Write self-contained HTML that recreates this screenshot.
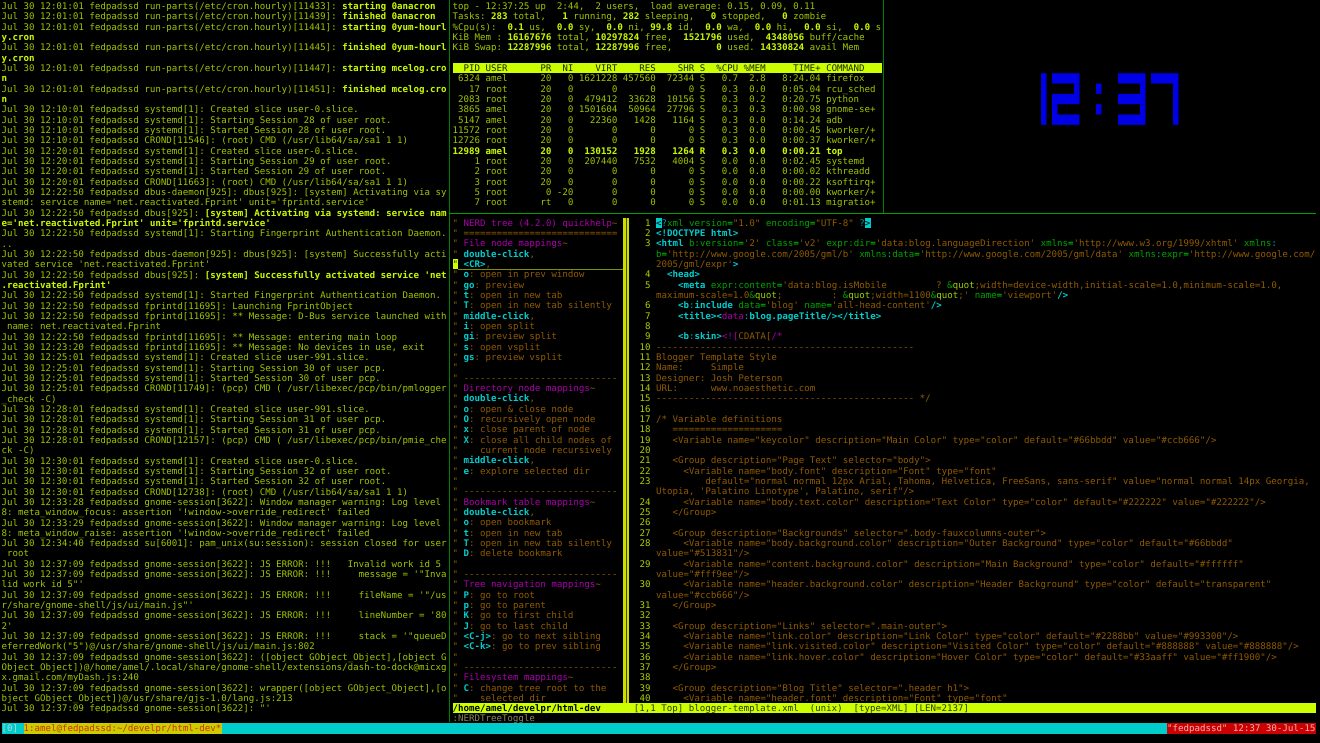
<!DOCTYPE html>
<html><head><meta charset="utf-8"><title>tmux</title>
<style>
html,body{margin:0;padding:0;background:#000;width:1320px;height:743px;overflow:hidden}
#w{position:relative;width:1320px;height:743px;overflow:hidden;filter:blur(.35px);background:#000}
pre{position:absolute;margin:1.1px 0 0;font-family:"DejaVu Sans Mono","Liberation Mono",monospace;font-size:9.13px;line-height:10.33px;white-space:pre;text-rendering:geometricPrecision;font-kerning:none}
.r{position:absolute}
#log{left:1.5px;top:1px;color:#9cc200}
#log b,#top b{color:#c6f800;font-weight:bold}
#top{left:452.5px;top:1px;color:#9cc200}
#tree,#code{color:#8f5a00;top:217.72px}
#tree{left:452.5px}
#code{left:628.5px}
i{font-style:normal;font-weight:bold;color:#00cccc}
em{font-style:normal;color:#00a000}
u{text-decoration:none;color:#00e000}
s{text-decoration:none;color:#a800a8}
#code b{font-weight:normal;color:#a8cc00}
tt{font-family:inherit;color:#00a0a0}
var{font-style:normal;color:#99cc00}
</style></head><body><div id="w">
<div class="r" style="left:449px;top:0;width:1px;height:722px;background:#008000"></div>
<div class="r" style="left:883px;top:0;width:1px;height:213px;background:#008000"></div>
<div class="r" style="left:449px;top:212.6px;width:867px;height:1px;background:#00a000"></div>
<div class="r" style="left:452.5px;top:62.9px;width:429px;height:10.32px;background:#ccff00"></div>
<div class="r" style="left:623px;top:217.7px;width:5.5px;height:485.1px;background:#ccdd00"></div>
<div class="r" style="left:625.5px;top:217.7px;width:1px;height:485.1px;background:#4a5000"></div>
<div class="r" style="left:452.5px;top:259px;width:5.5px;height:10.3px;background:#ccff00"></div>
<div class="r" style="left:458px;top:268.6px;width:165px;height:1px;background:#7f8f00"></div>
<div class="r" style="left:656px;top:218px;width:5.5px;height:10px;background:#00cccc"></div>
<div class="r" style="left:865px;top:218px;width:5.5px;height:10px;background:#00cccc"></div>
<div class="r" style="left:452.5px;top:702.8px;width:863.5px;height:10.32px;background:#ccff00"></div>
<div class="r" style="left:1.5px;top:723.4px;width:1314.5px;height:10.32px;background:#00cccc"></div>
<div class="r" style="left:23.5px;top:723.4px;width:198px;height:10.32px;background:#cccc00"></div>
<div class="r" style="left:1167px;top:723.4px;width:149px;height:10.32px;background:#cc0000"></div>
<svg class="r" style="left:0;top:0" width="1320" height="743" fill="#0000e6">
<rect x="1041" y="73.24" width="5.5" height="51.6"/>
<rect x="1052" y="73.24" width="27.5" height="10.32"/><rect x="1074" y="83.56" width="5.5" height="10.32"/><rect x="1052" y="93.88" width="27.5" height="10.32"/><rect x="1052" y="104.2" width="5.5" height="10.32"/><rect x="1052" y="114.52" width="27.5" height="10.32"/>
<rect x="1096" y="83.56" width="5.5" height="10.32"/><rect x="1096" y="104.2" width="5.5" height="10.32"/>
<rect x="1118" y="73.24" width="27.5" height="10.32"/><rect x="1140" y="83.56" width="5.5" height="10.32"/><rect x="1118" y="93.88" width="27.5" height="10.32"/><rect x="1140" y="104.2" width="5.5" height="10.32"/><rect x="1118" y="114.52" width="27.5" height="10.32"/>
<rect x="1151" y="73.24" width="27.5" height="10.32"/><rect x="1173" y="83.56" width="5.5" height="41.28"/>
</svg>
<pre id="log">Jul 30 12:01:01 fedpadssd run-parts(/etc/cron.hourly)[11433]: <b>starting 0anacron</b>
Jul 30 12:01:01 fedpadssd run-parts(/etc/cron.hourly)[11439]: <b>finished 0anacron</b>
Jul 30 12:01:01 fedpadssd run-parts(/etc/cron.hourly)[11441]: <b>starting 0yum-hourl</b>
<b>y.cron</b>
Jul 30 12:01:01 fedpadssd run-parts(/etc/cron.hourly)[11445]: <b>finished 0yum-hourl</b>
<b>y.cron</b>
Jul 30 12:01:01 fedpadssd run-parts(/etc/cron.hourly)[11447]: <b>starting mcelog.cro</b>
<b>n</b>
Jul 30 12:01:01 fedpadssd run-parts(/etc/cron.hourly)[11451]: <b>finished mcelog.cro</b>
<b>n</b>
Jul 30 12:10:01 fedpadssd systemd[1]: Created slice user-0.slice.
Jul 30 12:10:01 fedpadssd systemd[1]: Starting Session 28 of user root.
Jul 30 12:10:01 fedpadssd systemd[1]: Started Session 28 of user root.
Jul 30 12:10:01 fedpadssd CROND[11546]: (root) CMD (/usr/lib64/sa/sa1 1 1)
Jul 30 12:20:01 fedpadssd systemd[1]: Created slice user-0.slice.
Jul 30 12:20:01 fedpadssd systemd[1]: Starting Session 29 of user root.
Jul 30 12:20:01 fedpadssd systemd[1]: Started Session 29 of user root.
Jul 30 12:20:01 fedpadssd CROND[11663]: (root) CMD (/usr/lib64/sa/sa1 1 1)
Jul 30 12:22:50 fedpadssd dbus-daemon[925]: dbus[925]: [system] Activating via sy
stemd: service name='net.reactivated.Fprint' unit='fprintd.service'
Jul 30 12:22:50 fedpadssd dbus[925]: <b>[system] Activating via systemd: service nam</b>
<b>e='net.reactivated.Fprint' unit='fprintd.service'</b>
Jul 30 12:22:50 fedpadssd systemd[1]: Starting Fingerprint Authentication Daemon.
..
Jul 30 12:22:50 fedpadssd dbus-daemon[925]: dbus[925]: [system] Successfully acti
vated service 'net.reactivated.Fprint'
Jul 30 12:22:50 fedpadssd dbus[925]: <b>[system] Successfully activated service 'net</b>
<b>.reactivated.Fprint'</b>
Jul 30 12:22:50 fedpadssd systemd[1]: Started Fingerprint Authentication Daemon.
Jul 30 12:22:50 fedpadssd fprintd[11695]: Launching FprintObject
Jul 30 12:22:50 fedpadssd fprintd[11695]: ** Message: D-Bus service launched with
 name: net.reactivated.Fprint
Jul 30 12:22:50 fedpadssd fprintd[11695]: ** Message: entering main loop
Jul 30 12:23:20 fedpadssd fprintd[11695]: ** Message: No devices in use, exit
Jul 30 12:25:01 fedpadssd systemd[1]: Created slice user-991.slice.
Jul 30 12:25:01 fedpadssd systemd[1]: Starting Session 30 of user pcp.
Jul 30 12:25:01 fedpadssd systemd[1]: Started Session 30 of user pcp.
Jul 30 12:25:01 fedpadssd CROND[11749]: (pcp) CMD ( /usr/libexec/pcp/bin/pmlogger
_check -C)
Jul 30 12:28:01 fedpadssd systemd[1]: Created slice user-991.slice.
Jul 30 12:28:01 fedpadssd systemd[1]: Starting Session 31 of user pcp.
Jul 30 12:28:01 fedpadssd systemd[1]: Started Session 31 of user pcp.
Jul 30 12:28:01 fedpadssd CROND[12157]: (pcp) CMD ( /usr/libexec/pcp/bin/pmie_che
ck -C)
Jul 30 12:30:01 fedpadssd systemd[1]: Created slice user-0.slice.
Jul 30 12:30:01 fedpadssd systemd[1]: Starting Session 32 of user root.
Jul 30 12:30:01 fedpadssd systemd[1]: Started Session 32 of user root.
Jul 30 12:30:01 fedpadssd CROND[12738]: (root) CMD (/usr/lib64/sa/sa1 1 1)
Jul 30 12:33:28 fedpadssd gnome-session[3622]: Window manager warning: Log level 
8: meta_window_focus: assertion '!window-&gt;override_redirect' failed
Jul 30 12:33:29 fedpadssd gnome-session[3622]: Window manager warning: Log level 
8: meta_window_raise: assertion '!window-&gt;override_redirect' failed
Jul 30 12:34:40 fedpadssd su[6001]: pam_unix(su:session): session closed for user
 root
Jul 30 12:37:09 fedpadssd gnome-session[3622]: JS ERROR: !!!   Invalid work id 5
Jul 30 12:37:09 fedpadssd gnome-session[3622]: JS ERROR: !!!     message = '"Inva
lid work id 5"'
Jul 30 12:37:09 fedpadssd gnome-session[3622]: JS ERROR: !!!     fileName = '"/us
r/share/gnome-shell/js/ui/main.js"'
Jul 30 12:37:09 fedpadssd gnome-session[3622]: JS ERROR: !!!     lineNumber = '80
2'
Jul 30 12:37:09 fedpadssd gnome-session[3622]: JS ERROR: !!!     stack = '"queueD
eferredWork("5")@/usr/share/gnome-shell/js/ui/main.js:802
Jul 30 12:37:09 fedpadssd gnome-session[3622]: ([object GObject_Object],[object G
Object_Object])@/home/amel/.local/share/gnome-shell/extensions/dash-to-dock@micxg
x.gmail.com/myDash.js:240
Jul 30 12:37:09 fedpadssd gnome-session[3622]: wrapper([object GObject_Object],[o
bject GObject_Object])@/usr/share/gjs-1.0/lang.js:213
Jul 30 12:37:09 fedpadssd gnome-session[3622]: "'</pre>
<pre id="top">top - 12:37:25 up  2:44,  2 users,  load average: 0.15, 0.09, 0.11
Tasks: <b>283</b> total,   <b>1</b> running, <b>282</b> sleeping,   <b>0</b> stopped,   <b>0</b> zombie
%Cpu(s):  <b>0.1</b> us,  <b>0.0</b> sy,  <b>0.0</b> ni, <b>99.8</b> id,  <b>0.0</b> wa,  <b>0.0</b> hi,  <b>0.0</b> si,  <b>0.0</b> s
KiB Mem : <b>16167676</b> total, <b>10297824</b> free,  <b>1521796</b> used,  <b>4348056</b> buff/cache
KiB Swap: <b>12287996</b> total, <b>12287996</b> free,        <b>0</b> used. <b>14330824</b> avail Mem

<span style="color:#1c2400">  PID USER      PR  NI    VIRT    RES    SHR S  %CPU %MEM     TIME+ COMMAND</span>
 6324 amel      20   0 1621228 457560  72344 S   0.7  2.8   8:24.04 firefox
   17 root      20   0       0      0      0 S   0.3  0.0   0:05.04 rcu_sched
 2083 root      20   0  479412  33628  10156 S   0.3  0.2   0:20.75 python
 3865 amel      20   0 1501604  50964  27796 S   0.3  0.3   0:00.98 gnome-se+
 5147 amel      20   0   22360   1428   1164 S   0.3  0.0   0:14.24 adb
11572 root      20   0       0      0      0 S   0.3  0.0   0:00.45 kworker/+
12726 root      20   0       0      0      0 S   0.3  0.0   0:00.37 kworker/+
<b>12989 amel      20   0  130152   1928   1264 R   0.3  0.0   0:00.21 top</b>
    1 root      20   0  207440   7532   4004 S   0.0  0.0   0:02.45 systemd
    2 root      20   0       0      0      0 S   0.0  0.0   0:00.02 kthreadd
    3 root      20   0       0      0      0 S   0.0  0.0   0:00.22 ksoftirq+
    5 root       0 -20       0      0      0 S   0.0  0.0   0:00.00 kworker/+
    7 root      rt   0       0      0      0 S   0.0  0.0   0:01.13 migratio+</pre>
<pre id="tree">" <s>NERD tree (4.2.0) quickhelp</s>~
" ============================
" <s>File node mappings</s>~
" <i>double-click</i>,
<span style="color:#332b00">"</span> <i>&lt;CR&gt;</i>,
" <i>o</i>: open in prev window
" <i>go</i>: preview
" <i>t</i>: open in new tab
" <i>T</i>: open in new tab silently
" <i>middle-click</i>,
" <i>i</i>: open split
" <i>gi</i>: preview split
" <i>s</i>: open vsplit
" <i>gs</i>: preview vsplit
"
" ----------------------------
" <s>Directory node mappings</s>~
" <i>double-click</i>,
" <i>o</i>: open &amp; close node
" <i>O</i>: recursively open node
" <i>x</i>: close parent of node
" <i>X</i>: close all child nodes of
"    current node recursively
" <i>middle-click</i>,
" <i>e</i>: explore selected dir
"
" ----------------------------
" <s>Bookmark table mappings</s>~
" <i>double-click</i>,
" <i>o</i>: open bookmark
" <i>t</i>: open in new tab
" <i>T</i>: open in new tab silently
" <i>D</i>: delete bookmark
"
" ----------------------------
" <s>Tree navigation mappings</s>~
" <i>P</i>: go to root
" <i>p</i>: go to parent
" <i>K</i>: go to first child
" <i>J</i>: go to last child
" <i>&lt;C-j&gt;</i>: go to next sibling
" <i>&lt;C-k&gt;</i>: go to prev sibling
"
" ----------------------------
" <s>Filesystem mappings</s>~
" <i>C</i>: change tree root to the
"    selected dir</pre>
<pre id="code"><b>   1 </b><span style="color:#000">&lt;</span><tt>?</tt><em>xml</em> <em>version</em><u>=</u>"1.0" <em>encoding</em><u>=</u>"UTF-8" <tt>?</tt><span style="color:#000">&gt;</span>
<b>   2 </b><i>&lt;!DOCTYPE html&gt;</i>
<b>   3 </b><i>&lt;html</i> <em>b:version</em><u>=</u>'2' <em>class</em><u>=</u>'v2' <em>expr:dir</em><u>=</u>'data:blog.languageDirection' <em>xmlns</em><u>=</u>'http://www.w3.org/1999/xhtml' <em>xmlns</em><tt>:</tt>
     <em>b</em><u>=</u>'http://www.google.com/2005/gml/b' <em>xmlns</em><tt>:</tt><em>data</em><u>=</u>'http://www.google.com/2005/gml/data' <em>xmlns</em><tt>:</tt><em>expr</em><u>=</u>'http://www.google.com/
     2005/gml/expr'<i>&gt;</i>
<b>   4 </b>  <i>&lt;head&gt;</i>
<b>   5 </b>    <i>&lt;meta</i> <em>expr:content</em><u>=</u>'data:blog.isMobile         ? <em>&amp;</em><var>quot</var>;width=device-width,initial-scale=1.0,minimum-scale=1.0,
     maximum-scale=1.0<em>&amp;</em><var>quot</var>;         : <em>&amp;</em><var>quot</var>;width=1100<em>&amp;</em><var>quot</var>;' <em>name</em><u>=</u>'viewport'<i>/&gt;</i>
<b>   6 </b>    <i>&lt;b</i><tt>:</tt><i>include</i> <em>data</em><u>=</u>'blog' <em>name</em><u>=</u>'all-head-content'<i>/&gt;</i>
<b>   7 </b>    <i>&lt;title&gt;&lt;</i><s>data</s><tt>:</tt><i>blog.pageTitle/&gt;&lt;/title&gt;</i>
<b>   8 </b>
<b>   9 </b>    <i>&lt;b</i><tt>:</tt><i>skin&gt;</i><s>&lt;![</s>CDATA[<s>/*</s>
<b>  10 </b>-----------------------------------------------
<b>  11 </b>Blogger Template Style
<b>  12 </b>Name:     Simple
<b>  13 </b>Designer: Josh Peterson
<b>  14 </b>URL:      www.noaesthetic.com
<b>  15 </b>----------------------------------------------- */
<b>  16 </b>
<b>  17 </b>/* Variable definitions
<b>  18 </b>   ====================
<b>  19 </b>   &lt;Variable name="keycolor" description="Main Color" type="color" default="#66bbdd" value="#ccb666"/&gt;
<b>  20 </b>
<b>  21 </b>   &lt;Group description="Page Text" selector="body"&gt;
<b>  22 </b>     &lt;Variable name="body.font" description="Font" type="font"
<b>  23 </b>         default="normal normal 12px Arial, Tahoma, Helvetica, FreeSans, sans-serif" value="normal normal 14px Georgia,
     Utopia, 'Palatino Linotype', Palatino, serif"/&gt;
<b>  24 </b>     &lt;Variable name="body.text.color" description="Text Color" type="color" default="#222222" value="#222222"/&gt;
<b>  25 </b>   &lt;/Group&gt;
<b>  26 </b>
<b>  27 </b>   &lt;Group description="Backgrounds" selector=".body-fauxcolumns-outer"&gt;
<b>  28 </b>     &lt;Variable name="body.background.color" description="Outer Background" type="color" default="#66bbdd"
     value="#513831"/&gt;
<b>  29 </b>     &lt;Variable name="content.background.color" description="Main Background" type="color" default="#ffffff"
     value="#fff9ee"/&gt;
<b>  30 </b>     &lt;Variable name="header.background.color" description="Header Background" type="color" default="transparent"
     value="#ccb666"/&gt;
<b>  31 </b>   &lt;/Group&gt;
<b>  32 </b>
<b>  33 </b>   &lt;Group description="Links" selector=".main-outer"&gt;
<b>  34 </b>     &lt;Variable name="link.color" description="Link Color" type="color" default="#2288bb" value="#993300"/&gt;
<b>  35 </b>     &lt;Variable name="link.visited.color" description="Visited Color" type="color" default="#888888" value="#888888"/&gt;
<b>  36 </b>     &lt;Variable name="link.hover.color" description="Hover Color" type="color" default="#33aaff" value="#ff1900"/&gt;
<b>  37 </b>   &lt;/Group&gt;
<b>  38 </b>
<b>  39 </b>   &lt;Group description="Blog Title" selector=".header h1"&gt;
<b>  40 </b>     &lt;Variable name="header.font" description="Font" type="font"</pre>
<pre style="left:452.5px;top:702.8px;color:#333800"><span style="color:#000;font-weight:bold">/home/amel/develpr/html-dev</span>      [1,1 Top] blogger-template.xml  (unix)  [type=XML] [LEN=2137]</pre>
<pre style="left:452.5px;top:713.12px;color:#8c8060">:NERDTreeToggle</pre>
<pre style="left:1.5px;top:723.4px;color:#a8dcdc">[0]</pre>
<pre style="left:23.5px;top:723.4px;color:#cc3300">1:amel@fedpadssd:~/develpr/html-dev*</pre>
<pre style="left:1167px;top:723.4px;color:#f0b0b0">"fedpadssd" 12:37 30-Jul-15</pre>
</div></body></html>
